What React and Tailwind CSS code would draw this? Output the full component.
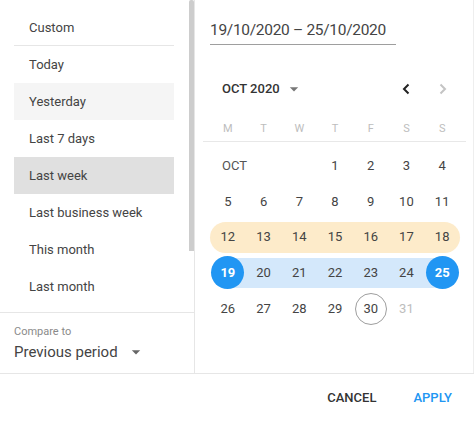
import React from "react";

const font = { fontFamily: "Roboto, 'Noto Sans', sans-serif" };

function Caret({ className = "" }) {
  return (
    <svg width="20" height="20" viewBox="0 0 24 24" className={className}>
      <path d="M7 10l5 5 5-5z" fill="currentColor" />
    </svg>
  );
}

function Chevron({ dir, className = "" }) {
  return (
    <svg width="24" height="24" viewBox="0 0 24 24" className={className}>
      {dir === "left" ? (
        <path d="M14.5 7.5 L10 12 L14.5 16.5" fill="none" stroke="currentColor" strokeWidth="2" />
      ) : (
        <path d="M9.5 7.5 L14 12 L9.5 16.5" fill="none" stroke="currentColor" strokeWidth="2" />
      )}
    </svg>
  );
}

const presets = [
  { label: "Today" },
  { label: "Yesterday", bg: "bg-[#f5f5f5]" },
  { label: "Last 7 days" },
  { label: "Last week", bg: "bg-[#e0e0e0]" },
  { label: "Last business week" },
  { label: "This month" },
  { label: "Last month" },
];

function LeftPanel() {
  return (
    <div className="w-[195px] shrink-0 flex flex-col border-r border-[#e6e6e6]">
      <div className="h-[312px] flex">
        <div className="flex-1 pl-[14px] pr-[15px] pt-[10px]">
          <div className="h-[35px] flex items-center pl-[15px] text-[13px] text-[#444]">Custom</div>
          <div className="h-px bg-[#e6e6e6]" />
          {presets.map((p) => (
            <div
              key={p.label}
              className={`h-[37px] flex items-center pl-[15px] text-[13px] text-[#444] ${p.bg || ""}`}
            >
              {p.label}
            </div>
          ))}
        </div>
        <div className="w-[5px] flex flex-col">
          <div className="h-[251px] w-[5px] bg-[#cdcdcd] rounded-t-[2px]" />
        </div>
      </div>
      <div className="border-t border-[#e6e6e6] h-[61px] pl-[14px] pt-[12px]">
        <div className="text-[11px] leading-[13px] text-[#8a8a8a]">Compare to</div>
        <div className="mt-[4px] flex items-center h-[20px] text-[15px] text-[#444]">
          <span>Previous period</span>
          <Caret className="ml-[8px] text-[#666]" />
        </div>
      </div>
    </div>
  );
}

const rows = [
  [null, null, null, 1, 2, 3, 4],
  [5, 6, 7, 8, 9, 10, 11],
  [12, 13, 14, 15, 16, 17, 18],
  [19, 20, 21, 22, 23, 24, 25],
  [26, 27, 28, 29, 30, 31, null],
];

function DayCell({ d, ci }) {
  if (d === null) return <div />;
  const orange = d >= 12 && d <= 18;
  const blue = d >= 19 && d <= 25;
  let band = "";
  if (orange) {
    band = "h-[31px] bg-[#fdebca]";
    if (ci === 0) band += " rounded-l-full";
    if (ci === 6) band += " rounded-r-full";
  } else if (blue) {
    if (d === 19) band = "h-[30px] bg-[linear-gradient(to_right,transparent_50%,#d4e8fb_50%)]";
    else if (d === 25) band = "h-[30px] bg-[linear-gradient(to_right,#d4e8fb_50%,transparent_50%)]";
    else band = "h-[30px] bg-[#d4e8fb]";
  }
  let inner = "w-[32px] h-[32px] rounded-full flex items-center justify-center text-[13px] text-[#444] shrink-0";
  if (d === 19 || d === 25) inner = "w-[33px] h-[33px] rounded-full flex items-center justify-center text-[13px] font-bold text-white bg-[#2196f3] shrink-0";
  if (d === 30) inner = "w-[32px] h-[32px] rounded-full flex items-center justify-center text-[13px] text-[#444] border border-[#9e9e9e] shrink-0";
  if (d === 31) inner = "w-[32px] h-[32px] rounded-full flex items-center justify-center text-[13px] text-[#bdbdbd] shrink-0";
  return (
    <div className="h-[35.7px] flex items-center">
      <div className={`w-full flex items-center justify-center ${band}`}>
        <div className={inner}>{d}</div>
      </div>
    </div>
  );
}

function RightPanel() {
  return (
    <div className="flex-1 min-w-0 pl-[15px] pt-[19px] border-r border-[#eeeeee]">
      <div className="w-[186px] border-b border-[#9e9e9e] pb-[3px] text-[15.5px] leading-[22px] text-[#444] whitespace-nowrap tracking-[-0.3px]">
        19/10/2020 – 25/10/2020
      </div>
      <div className="mt-[26px] h-[36px] flex items-center justify-between w-[250px]">
        <div className="flex items-center pl-[12px]">
          <span className="text-[13px] font-medium text-[#333]">OCT 2020</span>
          <Caret className="ml-[4px] text-[#777]" />
        </div>
        <div className="flex items-center gap-[13px] pr-[5px]">
          <Chevron dir="left" className="text-[#222]" />
          <Chevron dir="right" className="text-[#c4c4c4]" />
        </div>
      </div>
      <div className="-ml-[7px] w-[263px] pl-[7px] border-b border-[#e8e8e8]">
        <div className="w-[250px] grid grid-cols-7 pt-[13px] pb-[3px] text-[11px] leading-[18px] text-[#bdbdbd] text-center">
          {["M", "T", "W", "T", "F", "S", "S"].map((w, i) => (
            <div key={i}>{w}</div>
          ))}
        </div>
      </div>
      <div className="w-[250px] mt-[6px]">
        {rows.map((r, ri) => (
          <div key={ri} className="grid grid-cols-7">
            {ri === 0 ? (
              <>
                <div className="col-span-3 h-[35.7px] flex items-center pl-[12px] text-[13px] text-[#555]">OCT</div>
                {r.slice(3).map((d, i) => (
                  <DayCell key={i} d={d} ci={i + 3} />
                ))}
              </>
            ) : (
              r.map((d, i) => <DayCell key={i} d={d} ci={i} />)
            )}
          </div>
        ))}
      </div>
    </div>
  );
}

export default function App() {
  return (
    <div className="w-[474px] h-[421px] bg-white flex flex-col" style={font}>
      <div className="h-[374px] flex border-b border-[#e6e6e6]">
        <LeftPanel />
        <RightPanel />
      </div>
      <div className="flex-1 flex items-center justify-end gap-[5px] pr-[6px]">
        <div className="px-[16px] py-[8px] text-[13px] font-medium text-[#333]">CANCEL</div>
        <div className="px-[16px] py-[8px] text-[13px] font-medium text-[#2196f3]">APPLY</div>
      </div>
    </div>
  );
}
